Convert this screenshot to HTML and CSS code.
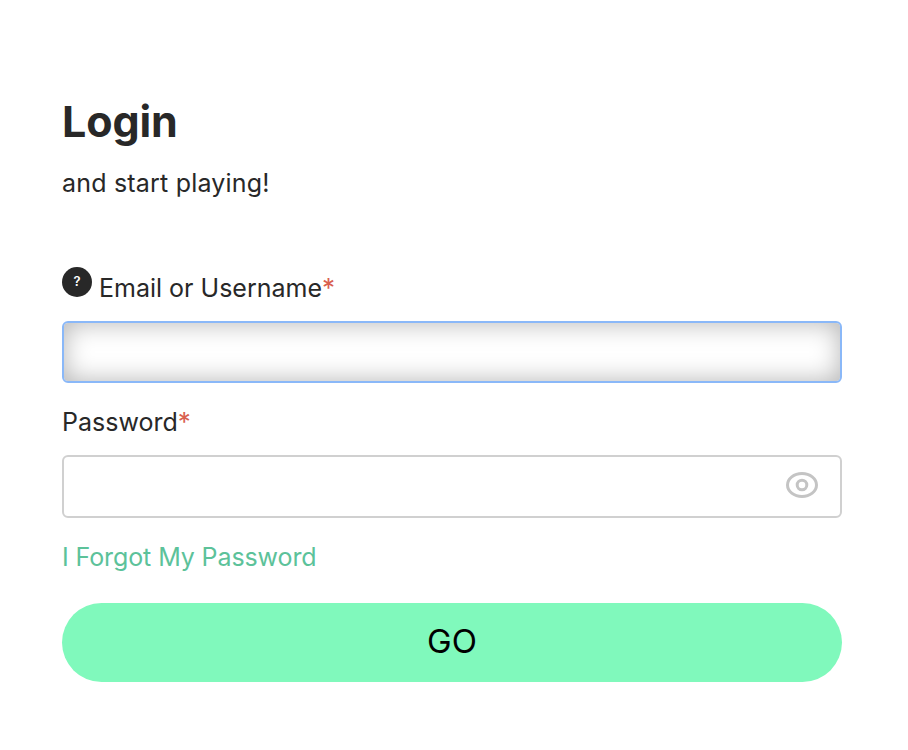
FILE: index.html

```html
<!DOCTYPE html>
<html lang="en">
<head>
    <meta charset="UTF-8">
    <meta name="viewport" content="width=device-width, initial-scale=1.0">
    <title>Login</title>
    <link rel="stylesheet" href="styles.css">
</head>
<body>
    <div class="container">
        <h1>Login</h1>
        <p class="subtitle">and start playing!</p>

        <form class="login-form">
            <div class="label-row">
                <span class="help-icon">?</span>
                <label for="username">Email or Username<span class="required">*</span></label>
            </div>
            <input id="username" class="text-input focused" type="text">

            <div class="label-row password-label">
                <label for="password">Password<span class="required">*</span></label>
            </div>
            <div class="password-field">
                <input id="password" class="text-input" type="password">
                <svg class="eye-icon" viewBox="0 0 32 26" width="32" height="26" fill="none" stroke="#c4c4c4" stroke-width="3">
                    <ellipse cx="16" cy="13" rx="14.500" ry="11.500"/>
                    <circle cx="16" cy="13" r="4.800"/>
                </svg>
            </div>

            <a class="forgot-link" href="#">I Forgot My Password</a>
            <button class="go-btn" type="button">GO</button>
        </form>
    </div>
</body>
</html>
```

FILE: styles.css

```css
body {
    font-family: 'Inter', 'Noto Sans', sans-serif;
    background-color: #ffffff;
    color: #282828;
    margin: 0;
}

.container {
    width: 780px;
    padding: 93px 0 0 62px;
}

h1 {
    font-size: 43px;
    line-height: 56px;
    font-weight: 700;
    letter-spacing: -0.1px;
    margin: 0;
}

.subtitle {
    font-size: 25px;
    line-height: 34px;
    letter-spacing: 0.2px;
    margin: 17px 0 0;
}

.login-form {
    display: flex;
    flex-direction: column;
    margin-top: 67px;
}

.label-row {
    display: flex;
    align-items: flex-start;
    gap: 7px;
    font-size: 25px;
    line-height: 34px;
}

.help-icon {
    width: 30px;
    height: 30px;
    border-radius: 50%;
    background-color: #282828;
    color: #ffffff;
    font-size: 13px;
    font-weight: 600;
    line-height: 28px;
    text-align: center;
}

.label-row label {
    margin-top: 4px;
}

.required {
    color: #d9604f;
    font-size: 26px;
}

.text-input {
    display: block;
    box-sizing: border-box;
    width: 100%;
    height: 63px;
    margin-top: 16px;
    border: 2px solid #d0d0d0;
    border-radius: 6px;
    background-color: #ffffff;
    outline: none;
}

.text-input.focused {
    height: 62px;
    border-color: #8ab8f8;
    box-shadow: inset 0 0 26px rgba(0,0,0,0.3);
}

.password-label {
    margin-top: 22px;
}

.password-label label {
    margin-top: 0;
}

.password-field {
    position: relative;
}

.eye-icon {
    position: absolute;
    right: 24px;
    top: 33px;
}

.forgot-link {
    color: #5cc29a;
    font-size: 25px;
    line-height: 34px;
    letter-spacing: -0.1px;
    text-decoration: none;
    margin-top: 22px;
}

.go-btn {
    height: 79px;
    margin-top: 29px;
    padding: 0 0 3px;
    border: none;
    border-radius: 40px;
    background-color: #80f9bc;
    color: #000000;
    font-family: inherit;
    font-size: 33px;
    cursor: pointer;
}
```
